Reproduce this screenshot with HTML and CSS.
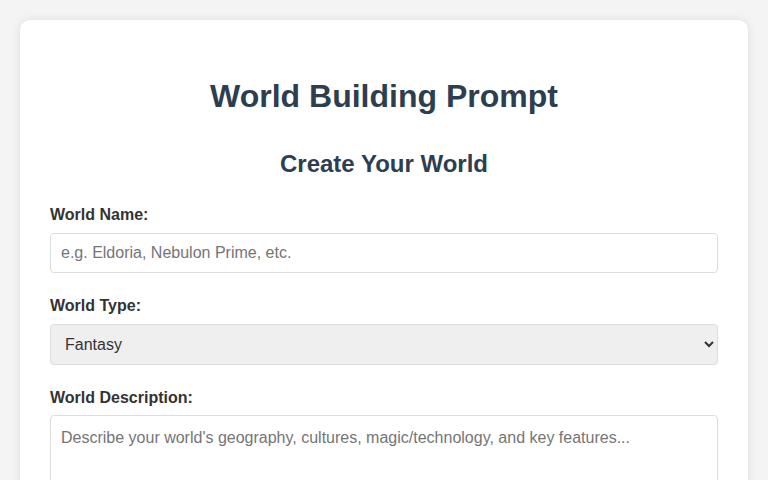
FILE: index.html
```html
<!DOCTYPE html>
<html lang="en">
<head>
<meta charset="utf-8">
<title>World Building Prompt</title>
<link rel="stylesheet" href="styles.css">
</head>
<body>
<div class="card">
  <h1 class="title">World Building Prompt</h1>
  <h2 class="subtitle">Create Your World</h2>
  <form class="form">
    <div class="group">
      <label class="label" for="name">World Name:</label>
      <input class="field" id="name" type="text" placeholder="e.g. Eldoria, Nebulon Prime, etc.">
    </div>
    <div class="group">
      <label class="label" for="type">World Type:</label>
      <select class="field select" id="type">
        <option>Fantasy</option>
        <option>Science Fiction</option>
        <option>Post-Apocalyptic</option>
      </select>
    </div>
    <div class="group">
      <label class="label" for="desc">World Description:</label>
      <textarea class="field area" id="desc" placeholder="Describe your world's geography, cultures, magic/technology, and key features..."></textarea>
    </div>
  </form>
</div>
</body>
</html>
```
FILE: styles.css
```css
* { box-sizing: border-box; }
html, body { margin: 0; padding: 0; }
body {
  background: #f4f4f4;
  font-family: "Liberation Sans", Arial, sans-serif;
  color: #333;
  padding: 20px;
}
.card {
  background: #fff;
  border-radius: 10px;
  box-shadow: 0 0 10px rgba(0,0,0,0.1);
  padding: 30px;
  min-height: 600px;
}
.title {
  font-size: 32px;
  line-height: 37px;
  margin: 28px 0 35px;
  text-align: center;
  color: #2c3e50;
}
.subtitle {
  font-size: 24px;
  line-height: 28px;
  margin: 0 0 28px;
  text-align: center;
  color: #2c3e50;
}
.form { display: flex; flex-direction: column; gap: 24px; }
.group { display: flex; flex-direction: column; }
.label {
  font-weight: bold;
  font-size: 16px;
  line-height: 18px;
  margin-bottom: 9px;
}
.group:last-child .label { margin-bottom: 8px; }
.field {
  width: 100%;
  font-family: "Liberation Sans", Arial, sans-serif;
  font-size: 16px;
  line-height: 18px;
  padding: 10px;
  border: 1px solid #ddd;
  border-radius: 4px;
  color: #333;
  background: #fff;
}
.field::placeholder { color: #757575; }
.select { background-color: #efefef; height: 41px; padding: 10px 10px; }
.area { height: 120px; resize: vertical; padding: 13px 10px 10px; }
```
